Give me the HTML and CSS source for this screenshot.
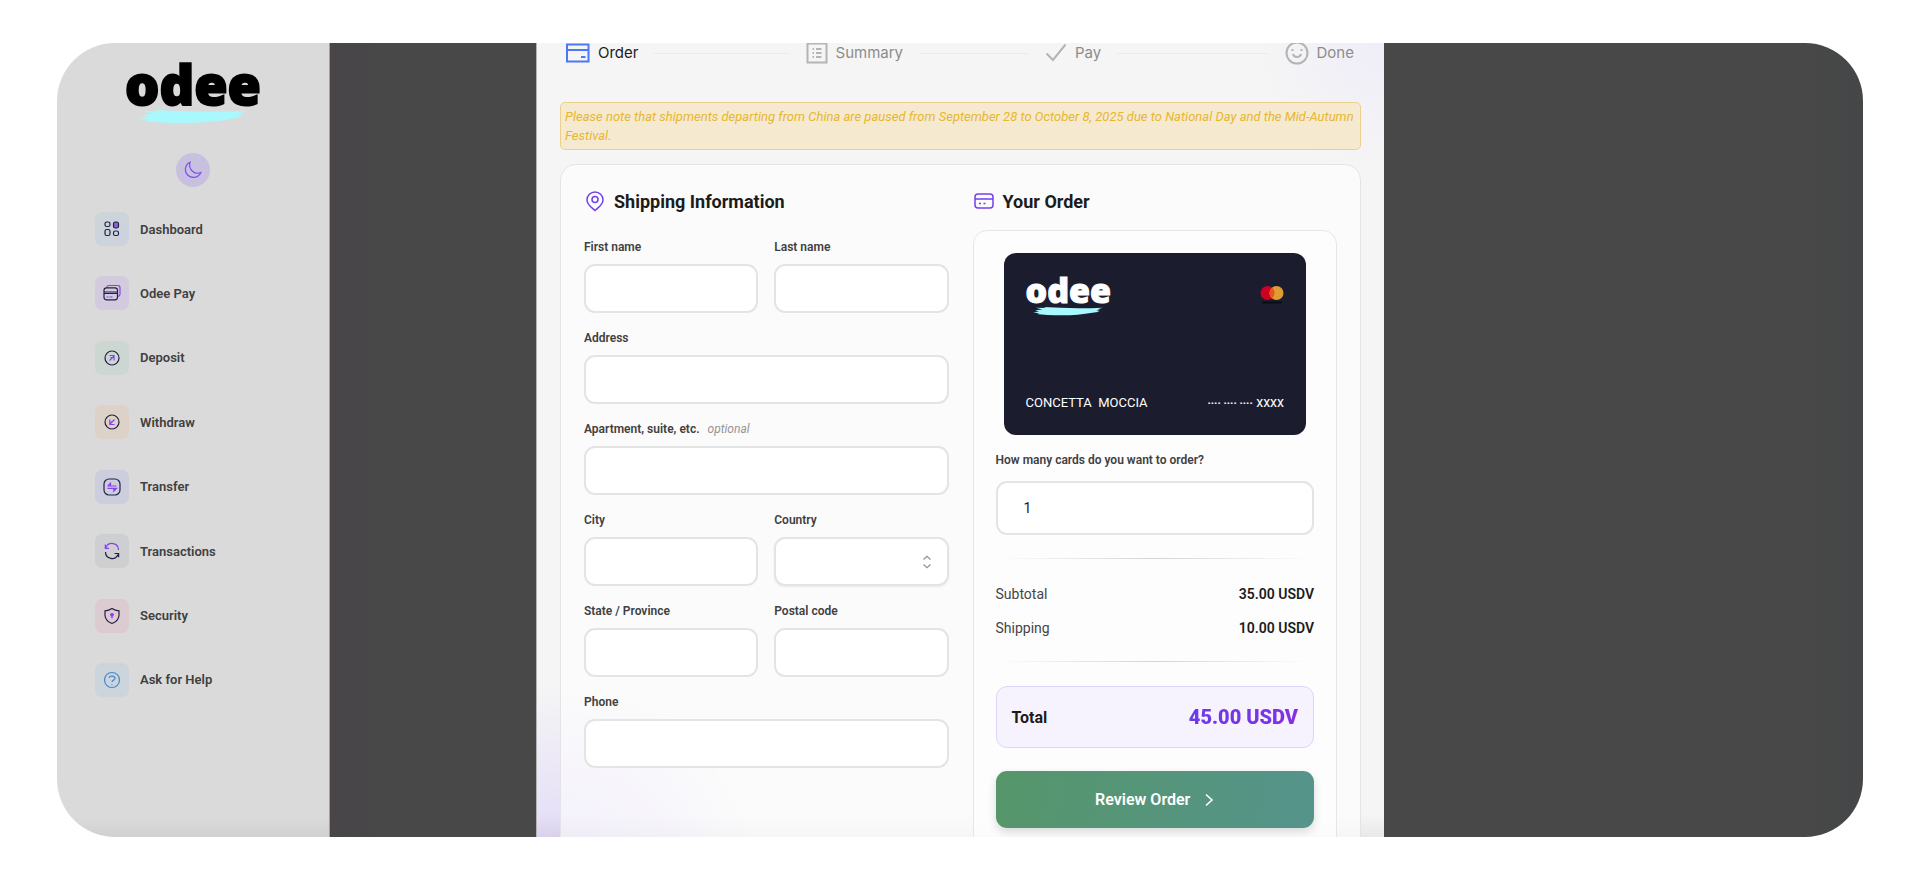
FILE: index.html
```html
<!DOCTYPE html>
<html lang="en">
<head>
  <meta charset="UTF-8" />
  <meta name="viewport" content="width=device-width, initial-scale=1.0" />
  <title>Odee - Order card</title>
  <link rel="stylesheet" href="styles.css">
</head>
<body>
  <div class="frame">
    <aside class="sidebar">
      <div class="logo">
        <span class="logo-text">odee</span>
        <svg class="logo-brush" viewBox="0 0 108 14"><path d="M4 1 L20 1.500 16 0 Q60 3 108 1 L100 3.500 104 4.500 98 6 103 7.500 92 9 Q70 13 44 13 Q20 13 5 11 L10 10 0 8 9 7 3 5 14 4Z"/></svg>
      </div>
      <button class="theme-btn" aria-label="Dark mode">
        <svg width="18" height="18" viewBox="0 0 18 18"><path d="M6 1.200A8 8 0 1 0 16.800 11.500C11 14 4 9 6 1.200Z"/></svg>
      </button>
      <nav class="menu">
        <a href="#" class="menu-item">
          <span class="tile tile-dashboard"><svg viewBox="0 0 18 18"><rect x="2" y="2" width="5" height="4.500" rx="1.800"/><rect x="10.500" y="2" width="5" height="6" rx="1.800" fill="#8f5fd6"/><rect x="2" y="9.500" width="5" height="6" rx="1.800"/><rect x="10.500" y="11" width="5" height="4.500" rx="1.800"/></svg></span>
          Dashboard
        </a>
        <a href="#" class="menu-item">
          <span class="tile tile-pay"><svg viewBox="0 0 18 18"><path class="violet" d="M4 3.500C4 2 5 1.500 6 1.500H15C16.500 1.500 17 2.500 17 4V10C17 11.500 16.500 12 15 12.500"/><rect x="1" y="3.800" width="13.500" height="12" rx="2.500"/><path d="M1 8H14.500M1 9.500H14.500"/><path class="violet" d="M3.500 13H5.500M6.500 13H9.500"/></svg></span>
          Odee Pay
        </a>
        <a href="#" class="menu-item">
          <span class="tile tile-deposit"><svg viewBox="0 0 18 18"><circle cx="9" cy="9" r="7"/><path class="violet" d="M6.500 11.500 11 7M6.500 6.500H11V11.500M7.500 8.500H9"/></svg></span>
          Deposit
        </a>
        <a href="#" class="menu-item">
          <span class="tile tile-withdraw"><svg viewBox="0 0 18 18"><circle cx="9" cy="9" r="7"/><path class="violet" d="M11.500 6.500 7 11M6.800 6.500V11.500H11.500M8.800 8V10"/></svg></span>
          Withdraw
        </a>
        <a href="#" class="menu-item">
          <span class="tile tile-transfer"><svg viewBox="0 0 18 18"><rect x="1" y="1" width="16" height="16" rx="5"/><path class="violet" d="M4.500 8H13.500M4.800 8 7.500 5.300V8M4.500 10.300H13.500L10.800 13V10.300"/></svg></span>
          Transfer
        </a>
        <a href="#" class="menu-item">
          <span class="tile tile-transactions"><svg viewBox="0 0 18 18"><path class="violet" d="M15.500 8A6.500 6.500 0 0 0 3 5.500M2.300 2.500V6.300H6"/><path d="M2.500 10A6.500 6.500 0 0 0 15 12.500M11.500 11.500H15.600V15.300"/></svg></span>
          Transactions
        </a>
        <a href="#" class="menu-item">
          <span class="tile tile-security"><svg viewBox="0 0 18 18"><path d="M9 1.500Q12 3.500 16 3.800V8.500Q15.500 14 9 16.500Q2.500 14 2 8.500V3.800Q6 3.500 9 1.500Z"/><circle cx="9" cy="7.800" r="1.300" fill="#8a3ff0" class="violet"/><path class="violet" d="M9 8V11.500"/></svg></span>
          Security
        </a>
        <a href="#" class="menu-item">
          <span class="tile tile-help"><svg viewBox="0 0 18 18"><circle cx="9" cy="9" r="7.500"/><path d="M6 7C6.500 4.200 12.200 4.500 12 7.500C11.800 9.300 9.200 9 9 11M9 13V13.800"/></svg></span>
          Ask for Help
        </a>
      </nav>
    </aside>

    <main class="backdrop">
      <section class="modal">
        <ol class="steps">
          <li class="step active">
            <svg width="24" height="24" viewBox="0 0 24 24"><rect x="1" y="3.500" width="21.500" height="17"/><path d="M1 9H22.500M15 16H19.500"/></svg>
            Order
          </li>
          <li class="step">
            <svg width="22" height="22" viewBox="0 0 22 22"><rect x="1.500" y="1.500" width="19" height="19"/><path d="M6.500 7H8M6.500 11H8M6.500 15H8M10 7H15.500M10 11H15.500M10 15H15.500"/></svg>
            Summary
          </li>
          <li class="step">
            <svg width="22" height="22" viewBox="0 0 22 22"><path d="M1.500 11.500 8 18 20.500 2.500"/></svg>
            Pay
          </li>
          <li class="step">
            <svg width="24" height="24" viewBox="0 0 24 24"><circle cx="12" cy="12" r="10.500"/><path d="M6.500 9H8.500M15.500 9H17.500M8 13C9 17 15 17 16 13"/></svg>
            Done
          </li>
        </ol>

        <p class="notice">Please note that shipments departing from China are paused from September 28 to October 8, 2025 due to National Day and the Mid-Autumn Festival.</p>

        <form class="card">
          <div class="shipping">
            <h2>
              <svg width="22" height="22" viewBox="0 0 22 22"><path d="M11 2A8 8 0 0 0 3 10C3 15 8 17.500 11 20.500C14 17.500 19 15 19 10A8 8 0 0 0 11 2Z"/><circle cx="11" cy="9.500" r="3"/></svg>
              Shipping Information
            </h2>
            <div class="fields">
              <div class="field"><label for="first">First name</label><input id="first" type="text"></div>
              <div class="field"><label for="last">Last name</label><input id="last" type="text"></div>
              <div class="field wide"><label for="address">Address</label><input id="address" type="text"></div>
              <div class="field wide"><label for="apartment">Apartment, suite, etc. <em>optional</em></label><input id="apartment" type="text"></div>
              <div class="field"><label for="city">City</label><input id="city" type="text"></div>
              <div class="field select-field">
                <label for="country">Country</label>
                <select id="country"><option></option></select>
                <svg class="arrows" width="10" height="14" viewBox="0 0 10 14"><path d="M1.500 4.500 5 1.200 8.500 4.500M1.500 9.500 5 12.800 8.500 9.500"/></svg>
              </div>
              <div class="field"><label for="state">State / Province</label><input id="state" type="text"></div>
              <div class="field"><label for="postal">Postal code</label><input id="postal" type="text"></div>
              <div class="field wide"><label for="phone">Phone</label><input id="phone" type="tel"></div>
            </div>
          </div>

          <div class="order">
            <h2>
              <svg width="22" height="22" viewBox="0 0 22 22"><rect x="2" y="4" width="18" height="14" rx="3"/><path d="M2 9H20M6 13.500H8M10.500 13.500H12.500"/></svg>
              Your Order
            </h2>
            <div class="order-box">
              <div class="bank-card">
                <div class="bank-top">
                  <div class="logo logo-small">
                    <span class="logo-text">odee</span>
                    <svg class="logo-brush" viewBox="0 0 108 14"><path d="M4 1 L20 1.500 16 0 Q60 3 108 1 L100 3.500 104 4.500 98 6 103 7.500 92 9 Q70 13 44 13 Q20 13 5 11 L10 10 0 8 9 7 3 5 14 4Z"/></svg>
                  </div>
                  <svg class="mastercard" width="24" height="20" viewBox="0 0 24 20"><circle cx="7.500" cy="8" r="7" fill="#cc0022"/><circle cx="16.500" cy="8" r="7" fill="#e09c32"/><path d="M12 2.600A7 7 0 0 1 12 13.400A7 7 0 0 1 12 2.600Z" fill="#e2571b"/><path d="M2 17.500H22" stroke="#0b0c14" stroke-width="2"/></svg>
                </div>
                <div class="bank-bottom">
                  <span class="holder">CONCETTA&nbsp; MOCCIA</span>
                  <span class="number"><small>···· ···· ····</small> xxxx</span>
                </div>
              </div>
              <label for="count">How many cards do you want to order?</label>
              <input id="count" class="count" type="text" value="1">
              <hr>
              <div class="line"><span>Subtotal</span><b>35.00 USDV</b></div>
              <div class="line"><span>Shipping</span><b>10.00 USDV</b></div>
              <hr>
              <div class="total"><span>Total</span><b>45.00 USDV</b></div>
              <button type="button" class="review-btn">
                Review Order
                <svg width="10" height="14" viewBox="0 0 10 14"><path d="M2 1.500 8 7 2 12.500"/></svg>
              </button>
            </div>
          </div>
        </form>
      </section>
    </main>
  </div>
</body>
</html>
```
FILE: styles.css
```css
* {
  box-sizing: border-box;
}

body {
  margin: 0;
  padding: 43px 57px;
  height: 100vh;
  background-color: #fff;
  font-family: Roboto, "Liberation Sans", sans-serif;
  font-size: 14px;
  color: #1c1c1c;
}

svg {
  fill: none;
  flex-shrink: 0;
}

/* Rounded window */
.frame {
  display: flex;
  height: 100%;
  border-radius: 58px;
  overflow: hidden;
}

/* Sidebar */
.sidebar {
  width: 273px;
  flex-shrink: 0;
  background: linear-gradient(to top, #d0d0d0, #dadada 20px);
  border-right: 1px solid #a0a0a0;
  display: flex;
  flex-direction: column;
  align-items: center;
  padding-top: 15px;
}

.logo {
  display: flex;
  flex-direction: column;
  align-items: center;
  color: #000;
}
.logo-text {
  font-family: "Open Sans", sans-serif;
  font-weight: 800;
  font-size: 54px;
  line-height: 52px;
  -webkit-text-stroke: 2px currentColor;
  stroke-linejoin: round;
}
.logo-brush {
  width: 108px;
  height: 14px;
  fill: #a9f8fd;
}

.theme-btn {
  width: 34px;
  height: 34px;
  margin-top: 29px;
  padding: 0;
  border: none;
  border-radius: 50%;
  background-color: #c8c0df;
  display: flex;
  align-items: center;
  justify-content: center;
}
.theme-btn svg {
  stroke: #7c4df0;
  stroke-width: 1.2;
}

.menu {
  align-self: stretch;
  display: flex;
  flex-direction: column;
  justify-content: space-between;
  height: 485px;
  margin: 25px 38px;
}
.menu-item {
  display: flex;
  align-items: center;
  gap: 11px;
  font-size: 13px;
  font-weight: 600;
  color: #404040;
  text-decoration: none;
}
.tile {
  width: 34px;
  height: 34px;
  border-radius: 7px;
  display: flex;
  align-items: center;
  justify-content: center;
}
.tile svg {
  width: 18px;
  height: 18px;
  stroke: #232048;
  stroke-width: 1.2;
}
.tile .violet {
  stroke: #8a3ff0;
}
.tile-dashboard { background: linear-gradient(135deg, #cdd6d8, #ccd2df); }
.tile-pay { background-color: #d2cbde; }
.tile-deposit { background-color: #cdd7d2; }
.tile-withdraw { background-color: #dcd2c8; }
.tile-transfer { background-color: #cccede; }
.tile-transactions { background-color: #cecfd0; }
.tile-security { background-color: #dccbd0; }
.tile-help { background-color: #ccd5db; }
.tile-help svg {
  stroke: #4a86cc;
}

/* Dark area with the modal */
.backdrop {
  flex: 1;
  padding: 0 479px 0 206px;
  background: linear-gradient(to right, #494548, #484848 50px, #484848 96%, #454647);
}
.modal {
  height: 100%;
  padding: 0 23px;
  overflow: hidden;
  border-left: 1px solid #b4b4b4;
  background:
    linear-gradient(to top, rgba(0, 0, 0, 0.05), transparent 24px),
    radial-gradient(circle at 30px 830px, #e0d6f8, transparent 190px),
    radial-gradient(circle at 850px 0, #efedf8, transparent 130px),
    #f5f5f5;
}

/* Steps */
.steps {
  display: flex;
  list-style: none;
  margin: 0;
  padding: 0 7px 0 6px;
  font-family: Inter, sans-serif;
  font-size: 15px;
  line-height: 20px;
  color: #8c8c8c;
}
.step {
  display: flex;
  align-items: center;
  gap: 8px;
  flex: 1;
}
.step:last-child {
  flex: none;
}
.step:not(:last-child)::after {
  content: "";
  flex: 1;
  height: 1px;
  margin: 0 16px 0 8px;
  background-color: #ebebeb;
}
.step svg {
  stroke: #b4b4b4;
  stroke-width: 2;
  margin: -2px 0;
}
.step.active {
  color: #1c1c1c;
}
.step.active svg {
  stroke: #4a78f8;
}

.notice {
  margin: 39px 0 14px;
  padding: 4px;
  border: 1px solid #edcf8c;
  border-radius: 5px;
  background-color: #f5ead0;
  color: #e8b62f;
  font-size: 13px;
  font-style: italic;
  line-height: 19px;
}

/* Form card */
.card {
  display: grid;
  grid-template-columns: 1fr 1fr;
  gap: 24px;
  padding: 22px 23px;
  border: 1px solid #e4e4e6;
  border-radius: 16px;
  background-color: rgba(255, 255, 255, 0.6);
}
h2 {
  display: flex;
  align-items: center;
  gap: 8px;
  margin: 0;
  height: 28px;
  font-size: 18px;
  font-weight: 700;
}
h2 svg {
  stroke: #7340ea;
  stroke-width: 1.5;
}
.fields {
  display: grid;
  grid-template-columns: 1fr 1fr;
  gap: 16px;
  margin-top: 23px;
}
.wide {
  grid-column: span 2;
}
label {
  display: block;
  font-size: 12px;
  font-weight: 600;
  line-height: 18px;
  color: #404040;
}
label em {
  margin-left: 5px;
  font-weight: 400;
  color: #959595;
}
input,
select {
  display: block;
  width: 100%;
  height: 49px;
  margin-top: 8px;
  padding: 0 16px;
  border: 2px solid #e4e4e4;
  border-radius: 11px;
  background-color: rgba(255, 255, 255, 0.9);
  font: inherit;
  color: #1c1c1c;
}
.select-field {
  position: relative;
}
select {
  appearance: none;
  box-shadow: 0 1px 2px rgba(0, 0, 0, 0.08);
}
.arrows {
  position: absolute;
  right: 17px;
  bottom: 17px;
  stroke: #929292;
  stroke-width: 1.2;
  pointer-events: none;
}

/* Order summary */
.order-box {
  height: 700px;
  margin-top: 15px;
  padding: 22px;
  border: 1px solid #e6e6e8;
  border-radius: 14px;
  background-color: rgba(255, 255, 255, 0.6);
}
.bank-card {
  display: flex;
  flex-direction: column;
  justify-content: space-between;
  height: 182px;
  margin: 0 8px 16px;
  padding: 20px 22px 25px;
  border-radius: 12px;
  background-color: #1b1d2e;
  color: #fff;
}
.bank-top,
.bank-bottom {
  display: flex;
  justify-content: space-between;
  align-items: center;
}
.logo-small {
  color: #fff;
}
.logo-small .logo-text {
  font-size: 34px;
  line-height: 34px;
  -webkit-text-stroke-width: 1px;
}
.logo-small .logo-brush {
  width: 70px;
  height: 9px;
}
.holder {
  font-size: 13px;
}
.number small {
  font-size: 11px;
  font-weight: 700;
}
.count {
  height: 54px;
  margin-top: 12px;
  padding: 0 26px;
}
hr {
  height: 1px;
  margin: 23px 0 18px;
  border: none;
  background: linear-gradient(to right, transparent, #d4d4d4, transparent);
}
.line {
  display: flex;
  justify-content: space-between;
  line-height: 34px;
  color: #454545;
}
.line b {
  font-weight: 600;
  color: #1c1c1c;
}
.line + hr {
  margin: 16px 0 24px;
}
.total {
  display: flex;
  justify-content: space-between;
  align-items: center;
  height: 62px;
  padding: 0 15px;
  border: 1px solid #dcd6fb;
  border-radius: 11px;
  background-color: #f6f3ff;
  font-size: 16px;
  font-weight: 700;
}
.total b {
  font-size: 20px;
  background: linear-gradient(to right, #6a3be8, #8430e4);
  background-clip: text;
  -webkit-background-clip: text;
  color: transparent;
}
.review-btn {
  display: flex;
  align-items: center;
  justify-content: center;
  gap: 14px;
  width: 100%;
  height: 57px;
  margin-top: 23px;
  border: none;
  border-radius: 11px;
  background: linear-gradient(100deg, #56966a, #559488 90%);
  box-shadow: 0 4px 10px rgba(0, 0, 0, 0.14);
  font-family: inherit;
  font-size: 16px;
  font-weight: 600;
  color: #fff;
}
.review-btn svg {
  stroke: #fff;
  stroke-width: 1.6;
}
```
